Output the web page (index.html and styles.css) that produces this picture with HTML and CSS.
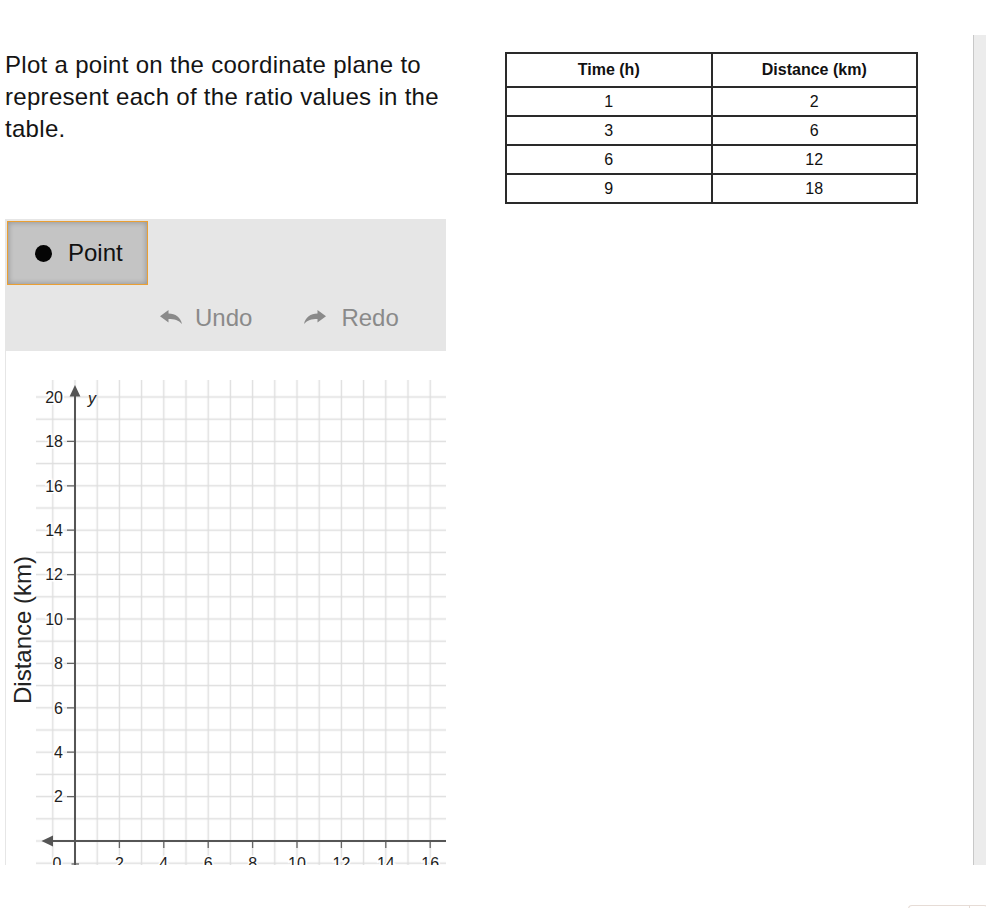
FILE: index.html
```html
<!DOCTYPE html>
<html>
<head>
<meta charset="utf-8">
<link rel="stylesheet" href="styles.css">
</head>
<body>
<div class="page">
  <div class="left">
    <p class="prompt">Plot a point on the coordinate plane to<br>represent each of the ratio values in the<br>table.</p>
    <div class="toolbar">
      <div class="tool-point"><span class="dot"></span><span>Point</span></div>
      <div class="history">
        <span class="hist-item">
          <svg class="hist-icon" viewBox="0 0 22 14" width="22" height="14"><path d="M0 6.2 L8.5 0 V3.6 C15.5 3.6 20.5 7.5 22 14 C18.5 10.2 14.5 9 8.5 9 V12.4 Z"/></svg>
          <span>Undo</span>
        </span>
        <span class="hist-item redo">
          <svg class="hist-icon" viewBox="0 0 22 14" width="22" height="14"><path transform="translate(22 0) scale(-1 1)" d="M0 6.2 L8.5 0 V3.6 C15.5 3.6 20.5 7.5 22 14 C18.5 10.2 14.5 9 8.5 9 V12.4 Z"/></svg>
          <span>Redo</span>
        </span>
      </div>
    </div>
    <div class="graph">
      <svg class="plane" viewBox="6 351 440 514" width="440" height="514">
        <defs>
          <pattern id="grid" patternUnits="userSpaceOnUse" x="63.9" y="829.9" width="22.2" height="22.2">
            <path d="M11.1 0V22.2M0 11.1H22.2" stroke="#dedede" stroke-width="1.4" fill="none"/>
          </pattern>
        </defs>
        <rect x="36" y="380" width="410" height="485" fill="url(#grid)"/>
        <g class="ticks">
          <path d="M67 796.6H75M67 752.2H75M67 707.8H75M67 663.4H75M67 619H75M67 574.6H75M67 530.2H75M67 485.8H75M67 441.4H75"/>
          <path d="M119.4 841V848M163.8 841V848M208.2 841V848M252.6 841V848M297 841V848M341.4 841V848M385.8 841V848M430.2 841V848"/>
          <path d="M71.5 864H79"/>
        </g>
        <g class="ylab">
          <text x="63" y="802.4">2</text>
          <text x="63" y="758">4</text>
          <text x="63" y="713.6">6</text>
          <text x="63" y="669.2">8</text>
          <text x="63" y="624.8">10</text>
          <text x="63" y="580.4">12</text>
          <text x="63" y="536">14</text>
          <text x="63" y="491.6">16</text>
          <text x="63" y="447.2">18</text>
          <text x="63" y="402.8">20</text>
        </g>
        <g class="xlab">
          <text x="57" y="869">0</text>
          <text x="119.4" y="869">2</text>
          <text x="163.8" y="869">4</text>
          <text x="208.2" y="869">6</text>
          <text x="252.6" y="869">8</text>
          <text x="297" y="869">10</text>
          <text x="341.4" y="869">12</text>
          <text x="385.8" y="869">14</text>
          <text x="430.2" y="869">16</text>
        </g>
        <g class="axes">
          <path class="axis-line" d="M75 865V394M52 841H446"/>
          <path class="axis-head" d="M75 385L69.6 396.5H80.4Z"/>
          <path class="axis-head" d="M41.5 841L53 835.6V846.4Z"/>
        </g>
        <text class="yname" x="88" y="404">y</text>
        <text class="axis-title" transform="translate(30.5 630) rotate(-90)">Distance (km)</text>
      </svg>
    </div>
  </div>
  <table class="ratio">
    <thead>
      <tr><th>Time (h)</th><th>Distance (km)</th></tr>
    </thead>
    <tbody>
      <tr><td>1</td><td>2</td></tr>
      <tr><td>3</td><td>6</td></tr>
      <tr><td>6</td><td>12</td></tr>
      <tr><td>9</td><td>18</td></tr>
    </tbody>
  </table>
  <div class="scroll-strip"></div>
</div>
<div class="footer"><div class="tab"><span class="tab-sep"></span></div></div>
</body>
</html>
```
FILE: styles.css
```css
html, body {
  margin: 0;
  padding: 0;
}
body {
  width: 986px;
  height: 908px;
  overflow: hidden;
  background: #ffffff;
  font-family: "Liberation Sans", Arial, Helvetica, sans-serif;
  color: #111111;
}
.page {
  display: flex;
  align-items: flex-start;
}
.left {
  margin-left: 5px;
  width: 441px;
  flex: none;
}
.prompt {
  margin: 49px 0 0;
  font-size: 24px;
  line-height: 32px;
  letter-spacing: 0.3px;
  white-space: nowrap;
  color: #141414;
}
.toolbar {
  margin-top: 74px;
  height: 132px;
  box-sizing: border-box;
  padding: 2px;
  background: #e6e6e6;
}
.tool-point {
  display: flex;
  align-items: center;
  gap: 16px;
  width: 141px;
  height: 64px;
  box-sizing: border-box;
  padding: 0 0 0 27px;
  border: 1px solid #ea9f33;
  background: #c4c4c4;
  box-shadow: inset 0 0 5px 1px rgba(0, 0, 0, 0.22);
  font-size: 24px;
  color: #111111;
}
.dot {
  width: 17px;
  height: 17px;
  border-radius: 50%;
  background: #050505;
}
.history {
  display: flex;
  align-items: center;
  height: 40px;
  margin-top: 13px;
  padding-left: 153px;
  font-size: 24px;
  color: #8a8a8a;
}
.hist-item {
  display: flex;
  align-items: center;
  gap: 13px;
}
.hist-item.redo {
  margin-left: 52px;
  gap: 15px;
}
.hist-icon {
  fill: #8a8a8a;
  margin-top: -2px;
}
.graph {
  height: 514px;
  border-left: 1px solid #e6e6e6;
  overflow: hidden;
}
.plane {
  display: block;
}
.ticks path {
  stroke: #666666;
  stroke-width: 1.3;
  fill: none;
}
.ylab text, .xlab text {
  font-family: "Liberation Sans", Arial, sans-serif;
  font-size: 16px;
  fill: #1e1e1e;
  stroke: #ffffff;
  stroke-width: 3px;
  paint-order: stroke;
}
.ylab text {
  text-anchor: end;
}
.xlab text {
  text-anchor: middle;
}
.axis-line {
  stroke: #555555;
  stroke-width: 2;
  fill: none;
}
.axis-head {
  fill: #555555;
}
.yname {
  font-family: "Liberation Sans", Arial, sans-serif;
  font-style: italic;
  font-size: 16px;
  fill: #222222;
}
.axis-title {
  font-family: "Liberation Sans", Arial, sans-serif;
  font-size: 24px;
  fill: #222222;
  text-anchor: middle;
}
.ratio {
  margin: 52px 0 0 59px;
  width: 413px;
  flex: none;
  border-collapse: collapse;
  table-layout: fixed;
  font-size: 16px;
  color: #111111;
}
.ratio th, .ratio td {
  border: 2px solid #2a2a2a;
  padding: 0;
  text-align: center;
  width: 50%;
}
.ratio th {
  height: 32px;
  font-size: 16px;
  font-weight: bold;
}
.ratio td {
  height: 27px;
}
.scroll-strip {
  margin-left: auto;
  margin-top: 35px;
  width: 12px;
  height: 830px;
  flex: none;
  border-left: 1px solid #c8c8c8;
  background: #ececec;
}
.footer {
  display: flex;
  justify-content: flex-end;
  margin-top: 40px;
}
.tab {
  display: flex;
  justify-content: flex-end;
  width: 78px;
  height: 12px;
  margin-right: -2px;
  border: 1px solid #e6dcd6;
  border-bottom: none;
  border-radius: 4px 4px 0 0;
}
.tab-sep {
  width: 17px;
  border-left: 1px solid #e6dcd6;
}
```
